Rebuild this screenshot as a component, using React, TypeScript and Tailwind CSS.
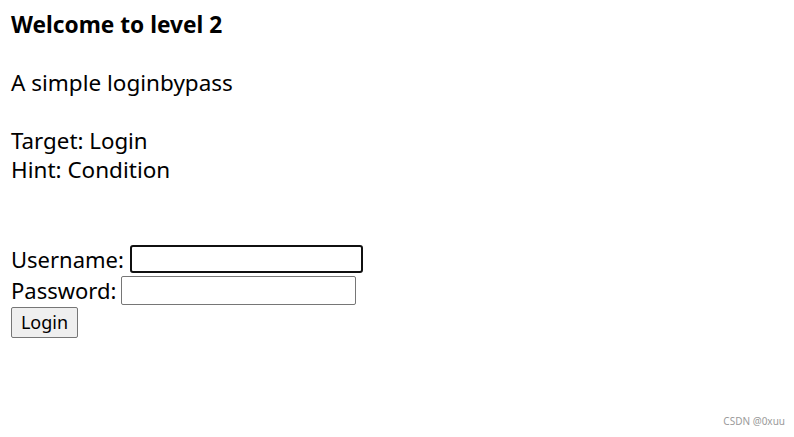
import React from "react";

export default function App() {
  return (
    <div className="relative w-[794px] h-[437px] bg-white text-black overflow-hidden" style={{ fontFamily: '"Noto Sans", "Open Sans", sans-serif' }}>
      <div className="pl-[11px] flex flex-col">
        <h3 className="mt-[8px] h-[34px] leading-[34px] text-[22.7px] font-bold">Welcome to level 2</h3>
        <p className="mt-[26px] h-[29px] leading-[29px] text-[22.5px]">A simple loginbypass</p>
        <p className="mt-[29px] h-[29px] leading-[29px] text-[22.3px]">Target: Login</p>
        <p className="h-[29px] leading-[29px] text-[22.5px]">Hint: Condition</p>
        <form className="mt-[60px] flex flex-col text-[22px]">
          <div className="flex items-center h-[30px]">
            <span className="leading-[29px]">Username:</span>
            <input className="ml-[6px] w-[233px] h-[28px] border-2 border-[#101010] rounded-[3px] outline-none" />
          </div>
          <div className="flex items-center h-[33px]">
            <span className="leading-[29px]">Password:</span>
            <input className="ml-[5px] w-[235px] h-[29px] border border-[#767676] rounded-[2px] outline-none" />
          </div>
          <div className="flex">
            <button type="button" className="w-[67px] h-[31px] bg-[#efefef] border border-[#767676] rounded-[2px] text-[18px] leading-[29px]">Login</button>
          </div>
        </form>
      </div>
      <div className="absolute right-[9px] bottom-[8px] text-[10px] text-[#9a9a9a]">CSDN @0xuu</div>
    </div>
  );
}
